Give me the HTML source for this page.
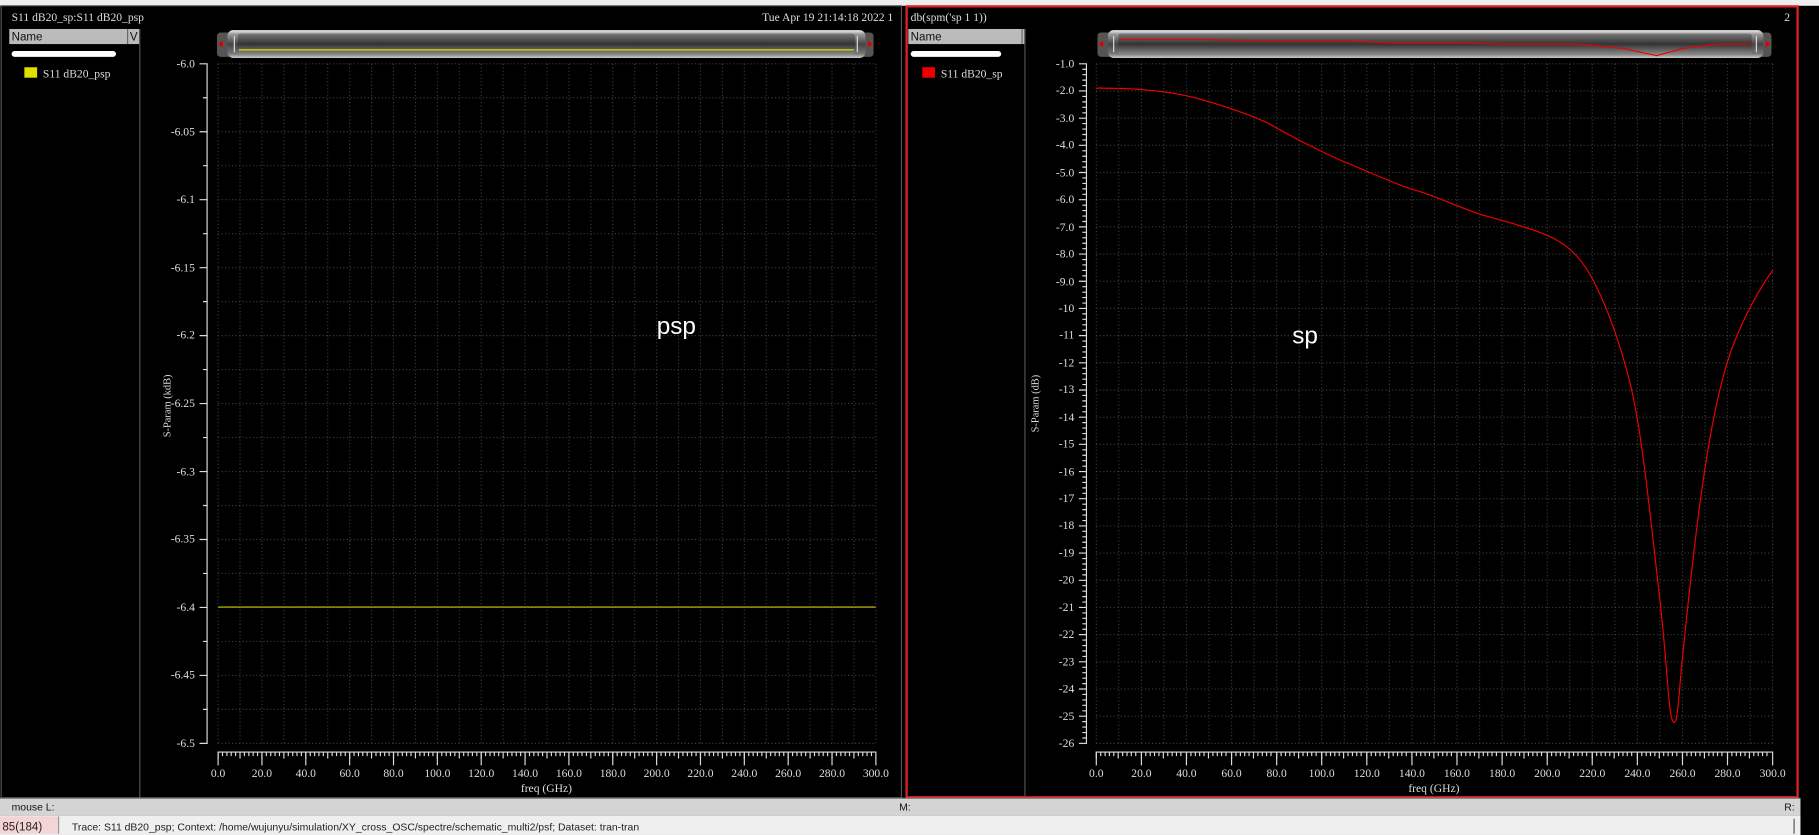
<!DOCTYPE html>
<html><head><meta charset="utf-8"><style>
html,body{margin:0;padding:0;background:#000;overflow:hidden;width:1819px;height:835px}
#w{position:absolute;left:0;top:0;width:1568px;height:720px;transform:scale(1.1601,1.1597);transform-origin:0 0;background:#000;font-family:"Liberation Serif",serif}
.t{position:absolute;color:#ddd;font-size:10px;white-space:nowrap}
</style></head><body><div id="w">
<div style="position:absolute;left:0;top:0;width:1568px;height:5px;background:#eee"></div>
<svg width="1568" height="720" style="position:absolute;left:0;top:0" font-family="Liberation Serif, serif" font-size="10" fill="#ddd">
<defs>
<linearGradient id="sb" x1="0" y1="0" x2="0" y2="1"><stop offset="0" stop-color="#eee"/><stop offset=".15" stop-color="#999"/><stop offset=".5" stop-color="#444"/><stop offset=".85" stop-color="#777"/><stop offset="1" stop-color="#ccc"/></linearGradient>
<linearGradient id="sbi" x1="0" y1="0" x2="0" y2="1"><stop offset="0" stop-color="#777"/><stop offset=".5" stop-color="#333"/><stop offset="1" stop-color="#888"/></linearGradient>
</defs>
<!-- left panel -->
<rect x="1" y="5" width="776" height="683" fill="none" stroke="#555"/>
<text x="10" y="18">S11 dB20_sp:S11 dB20_psp</text>
<text x="770" y="18" text-anchor="end">Tue Apr 19 21:14:18 2022  1</text>
<rect x="8" y="25" width="112" height="13" fill="#bbb"/>
<text x="10" y="35" fill="#111" font-family="Liberation Sans, sans-serif" font-size="10">Name</text>
<line x1="110" y1="25" x2="110" y2="38" stroke="#666"/><text x="112" y="35" fill="#111" font-family="Liberation Sans, sans-serif">V</text>
<rect x="10" y="44" width="90" height="5" rx="2.5" fill="#fff"/>
<rect x="21" y="58" width="11" height="9" fill="#e0e000"/>
<text x="37" y="67">S11 dB20_psp</text>
<line x1="120.5" y1="25" x2="120.5" y2="688" stroke="#555"/>
<!-- scrollbar left -->
<rect x="187" y="28" width="566" height="21" rx="3" fill="#555"/>
<rect x="196" y="26" width="550" height="24" rx="5" fill="url(#sb)"/>
<rect x="205" y="29" width="532" height="18" rx="2" fill="url(#sbi)"/>
<line x1="206" y1="43" x2="736" y2="43" stroke="#dd0" stroke-width="1"/>
<path d="M188 38l4-3v6z M752 38l-4-3v6z" fill="#d00"/>
<line x1="202" y1="31" x2="202" y2="45" stroke="#ddd"/><line x1="739" y1="31" x2="739" y2="45" stroke="#ddd"/>
<!-- grid left -->
<g stroke="#3a3a3a" stroke-dasharray="1,2">
<path d="M188 55V641M206.9 55V641M225.8 55V641M244.7 55V641M263.6 55V641M282.5 55V641M301.4 55V641M320.3 55V641M339.2 55V641M358.1 55V641M377 55V641M395.9 55V641M414.8 55V641M433.7 55V641M452.6 55V641M471.5 55V641M490.4 55V641M509.3 55V641M528.2 55V641M547.1 55V641M566 55V641M584.9 55V641M603.8 55V641M622.7 55V641M641.6 55V641M660.5 55V641M679.4 55V641M698.3 55V641M717.2 55V641M736.1 55V641M755 55V641"/>
<path d="M188 55H755M188 84.3H755M188 113.6H755M188 142.9H755M188 172.2H755M188 201.5H755M188 230.8H755M188 260.1H755M188 289.4H755M188 318.7H755M188 348H755M188 377.3H755M188 406.6H755M188 435.9H755M188 465.2H755M188 494.5H755M188 523.8H755M188 553.1H755M188 582.4H755M188 611.7H755M188 641H755"/>
</g>
<line x1="188" y1="523.5" x2="755" y2="523.5" stroke="#c8c800"/>
<!-- y axis left -->
<g stroke="#ddd"><line x1="178.5" y1="55" x2="178.5" y2="641"/>
<path d="M172 55h7M172 113.6h7M172 172.2h7M172 230.8h7M172 289.4h7M172 348h7M172 406.6h7M172 465.2h7M172 523.8h7M172 582.4h7M172 641h7M175 84.3h4M175 142.9h4M175 201.5h4M175 260.1h4M175 318.7h4M175 377.3h4M175 435.9h4M175 494.5h4M175 553.1h4M175 611.7h4"/></g>
<g text-anchor="end"><text x="168" y="58">-6.0</text><text x="168" y="117">-6.05</text><text x="168" y="175">-6.1</text><text x="168" y="234">-6.15</text><text x="168" y="292">-6.2</text><text x="168" y="351">-6.25</text><text x="168" y="410">-6.3</text><text x="168" y="468">-6.35</text><text x="168" y="527">-6.4</text><text x="168" y="585">-6.45</text><text x="168" y="644">-6.5</text></g>
<text transform="translate(147,350) rotate(-90)" text-anchor="middle" font-size="9">S-Param (kdB)</text>
<!-- x axis left -->
<line x1="188" y1="648.5" x2="755" y2="648.5" stroke="#ddd"/>
<path d="M188 648V660M225.8 648V660M263.6 648V660M301.4 648V660M339.2 648V660M377 648V660M414.8 648V660M452.6 648V660M490.4 648V660M528.2 648V660M566 648V660M603.8 648V660M641.6 648V660M679.4 648V660M717.2 648V660M755 648V660" stroke="#ddd"/>
<path d="M188 648v6M191.8 648v4M195.6 648v4M199.3 648v4M203.1 648v4M206.9 648v6M210.7 648v4M214.5 648v4M218.2 648v4M222 648v4" stroke="#ddd" id="mt"/>
<g stroke="#ddd"><use href="#mt" x="37.8"/><use href="#mt" x="75.6"/><use href="#mt" x="113.4"/><use href="#mt" x="151.2"/><use href="#mt" x="189"/><use href="#mt" x="226.8"/><use href="#mt" x="264.6"/><use href="#mt" x="302.4"/><use href="#mt" x="340.2"/><use href="#mt" x="378"/><use href="#mt" x="415.8"/><use href="#mt" x="453.6"/><use href="#mt" x="491.4"/><use href="#mt" x="529.2"/></g>
<g text-anchor="middle"><text x="188" y="670">0.0</text><text x="225.8" y="670">20.0</text><text x="263.6" y="670">40.0</text><text x="301.4" y="670">60.0</text><text x="339.2" y="670">80.0</text><text x="377" y="670">100.0</text><text x="414.8" y="670">120.0</text><text x="452.6" y="670">140.0</text><text x="490.4" y="670">160.0</text><text x="528.2" y="670">180.0</text><text x="566" y="670">200.0</text><text x="603.8" y="670">220.0</text><text x="641.6" y="670">240.0</text><text x="679.4" y="670">260.0</text><text x="717.2" y="670">280.0</text><text x="755" y="670">300.0</text>
<text x="471" y="683">freq (GHz)</text></g>
<text x="583" y="288" text-anchor="middle" font-family="Liberation Sans, sans-serif" font-size="21" fill="#fff">psp</text>

<!-- right panel -->
<rect x="781.5" y="5.5" width="768" height="682" fill="none" stroke="#d22" stroke-width="2"/>
<text x="785" y="18">db(spm('sp 1 1))</text>
<text x="1543" y="18" text-anchor="end">2</text>
<rect x="783" y="25" width="100" height="13" fill="#bbb"/>
<text x="785" y="35" fill="#111" font-family="Liberation Sans, sans-serif">Name</text>
<line x1="881" y1="25" x2="881" y2="38" stroke="#666"/>
<rect x="785" y="44" width="78" height="5" rx="2.5" fill="#fff"/>
<rect x="795" y="58" width="11" height="9" fill="#e00"/>
<text x="811" y="67">S11 dB20_sp</text>
<line x1="883.5" y1="25" x2="883.5" y2="687" stroke="#555"/>
<!-- scrollbar right -->
<rect x="946" y="28" width="581" height="21" rx="3" fill="#555"/>
<rect x="955" y="26" width="565" height="24" rx="5" fill="url(#sb)"/>
<rect x="964" y="29" width="546" height="18" rx="2" fill="url(#sbi)"/>
<path d="M965 34H1040L1080 35H1160L1200 37H1260L1290 38H1360L1400 42L1428 48L1450 42L1480 38H1510" stroke="#e00" fill="none"/>
<path d="M947 38l4-3v6z M1526 38l-4-3v6z" fill="#d00"/>
<line x1="960" y1="31" x2="960" y2="45" stroke="#ddd"/><line x1="1514" y1="31" x2="1514" y2="45" stroke="#ddd"/>
<!-- grid right -->
<g stroke="#3a3a3a" stroke-dasharray="1,2">
<path d="M945 55V641M964.4 55V641M983.9 55V641M1003.3 55V641M1022.7 55V641M1042.2 55V641M1061.6 55V641M1081 55V641M1100.5 55V641M1119.9 55V641M1139.3 55V641M1158.8 55V641M1178.2 55V641M1197.6 55V641M1217.1 55V641M1236.5 55V641M1255.9 55V641M1275.4 55V641M1294.8 55V641M1314.2 55V641M1333.7 55V641M1353.1 55V641M1372.5 55V641M1392 55V641M1411.4 55V641M1430.8 55V641M1450.3 55V641M1469.7 55V641M1489.1 55V641M1508.6 55V641M1528 55V641"/>
<path d="M945 55H1528M945 78.4H1528M945 101.9H1528M945 125.3H1528M945 148.8H1528M945 172.2H1528M945 195.6H1528M945 219.1H1528M945 242.5H1528M945 266H1528M945 289.4H1528M945 312.8H1528M945 336.3H1528M945 359.7H1528M945 383.2H1528M945 406.6H1528M945 430H1528M945 453.5H1528M945 476.9H1528M945 500.4H1528M945 523.8H1528M945 547.2H1528M945 570.7H1528M945 594.1H1528M945 617.6H1528M945 641H1528"/>
</g>
<path d="M945 76C980 76 1010 78 1040 87S1090 104 1100 110S1145 134 1160 140S1205 160 1220 164S1265 182 1280 186S1325 198 1340 206S1365 225 1375 245S1395 290 1405 330S1422 440 1430 510S1438 615 1442 622S1447 600 1450 570S1460 470 1468 415S1485 320 1495 295S1515 252 1528 233" stroke="#e00" fill="none" stroke-width="1"/>
<!-- y axis right -->
<line x1="936.5" y1="55" x2="936.5" y2="641" stroke="#ddd"/>
<g stroke="#ddd" id="yt"><path d="M930 55h7M933 59.7h4M933 64.4h4M933 69.1h4M933 73.8h4"/></g>
<g stroke="#ddd"><use href="#yt" y="23.44"/><use href="#yt" y="46.88"/><use href="#yt" y="70.32"/><use href="#yt" y="93.76"/><use href="#yt" y="117.2"/><use href="#yt" y="140.64"/><use href="#yt" y="164.08"/><use href="#yt" y="187.52"/><use href="#yt" y="210.96"/><use href="#yt" y="234.4"/><use href="#yt" y="257.84"/><use href="#yt" y="281.28"/><use href="#yt" y="304.72"/><use href="#yt" y="328.16"/><use href="#yt" y="351.6"/><use href="#yt" y="375.04"/><use href="#yt" y="398.48"/><use href="#yt" y="421.92"/><use href="#yt" y="445.36"/><use href="#yt" y="468.8"/><use href="#yt" y="492.24"/><use href="#yt" y="515.68"/><use href="#yt" y="539.12"/><use href="#yt" y="562.56"/><path d="M930 641h7"/></g>
<g text-anchor="end"><text x="926" y="58">-1.0</text><text x="926" y="81">-2.0</text><text x="926" y="105">-3.0</text><text x="926" y="128">-4.0</text><text x="926" y="152">-5.0</text><text x="926" y="175">-6.0</text><text x="926" y="199">-7.0</text><text x="926" y="222">-8.0</text><text x="926" y="246">-9.0</text><text x="926" y="269">-10</text><text x="926" y="292">-11</text><text x="926" y="316">-12</text><text x="926" y="339">-13</text><text x="926" y="363">-14</text><text x="926" y="386">-15</text><text x="926" y="410">-16</text><text x="926" y="433">-17</text><text x="926" y="456">-18</text><text x="926" y="480">-19</text><text x="926" y="503">-20</text><text x="926" y="527">-21</text><text x="926" y="550">-22</text><text x="926" y="574">-23</text><text x="926" y="597">-24</text><text x="926" y="621">-25</text><text x="926" y="644">-26</text></g>
<text transform="translate(895,348) rotate(-90)" text-anchor="middle" font-size="9">S-Param (dB)</text>
<line x1="945" y1="648.5" x2="1528" y2="648.5" stroke="#ddd"/>
<path d="M945 648V660M983.9 648V660M1022.7 648V660M1061.6 648V660M1100.5 648V660M1139.3 648V660M1178.2 648V660M1217.1 648V660M1255.9 648V660M1294.8 648V660M1333.7 648V660M1372.5 648V660M1411.4 648V660M1450.3 648V660M1489.1 648V660M1528 648V660" stroke="#ddd"/>
<g stroke="#ddd"><use href="#mt" x="757"/><use href="#mt" x="795.9"/><use href="#mt" x="834.8"/><use href="#mt" x="873.6"/><use href="#mt" x="912.5"/><use href="#mt" x="951.3"/><use href="#mt" x="990.2"/><use href="#mt" x="1029.1"/><use href="#mt" x="1067.9"/><use href="#mt" x="1106.8"/><use href="#mt" x="1145.7"/><use href="#mt" x="1184.5"/><use href="#mt" x="1223.4"/><use href="#mt" x="1262.3"/><use href="#mt" x="1301.1"/></g>
<g text-anchor="middle"><text x="945" y="670">0.0</text><text x="983.9" y="670">20.0</text><text x="1022.7" y="670">40.0</text><text x="1061.6" y="670">60.0</text><text x="1100.5" y="670">80.0</text><text x="1139.3" y="670">100.0</text><text x="1178.2" y="670">120.0</text><text x="1217.1" y="670">140.0</text><text x="1255.9" y="670">160.0</text><text x="1294.8" y="670">180.0</text><text x="1333.7" y="670">200.0</text><text x="1372.5" y="670">220.0</text><text x="1411.4" y="670">240.0</text><text x="1450.3" y="670">260.0</text><text x="1489.1" y="670">280.0</text><text x="1528" y="670">300.0</text>
<text x="1236" y="683">freq (GHz)</text></g>
<text x="1125" y="296" text-anchor="middle" font-family="Liberation Sans, sans-serif" font-size="21" fill="#fff">sp</text>
<!-- status -->
<rect x="0" y="688" width="1552" height="15" fill="#d4d4d4"/>
<line x1="0" y1="688.5" x2="1552" y2="688.5" stroke="#888"/>
<text x="10" y="699" fill="#111" font-family="Liberation Sans, sans-serif" font-size="9">mouse L:</text>
<text x="775" y="699" fill="#111" font-family="Liberation Sans, sans-serif" font-size="9">M:</text>
<text x="1538" y="699" fill="#111" font-family="Liberation Sans, sans-serif" font-size="9">R:</text>
<rect x="0" y="703" width="1552" height="17" fill="#efefef"/>
<rect x="0" y="704" width="50" height="15" fill="#f4d4d4"/>
<line x1="50.5" y1="704" x2="50.5" y2="719" stroke="#999"/>
<text x="2" y="716" fill="#222" font-family="Liberation Sans, sans-serif" font-size="10">85(184)</text>
<text x="62" y="716" fill="#222" font-family="Liberation Sans, sans-serif" font-size="9">Trace: S11 dB20_psp; Context: /home/wujunyu/simulation/XY_cross_OSC/spectre/schematic_multi2/psf; Dataset: tran-tran</text>
<line x1="1546.5" y1="706" x2="1546.5" y2="719" stroke="#555"/>
</svg>
</div></body></html>
